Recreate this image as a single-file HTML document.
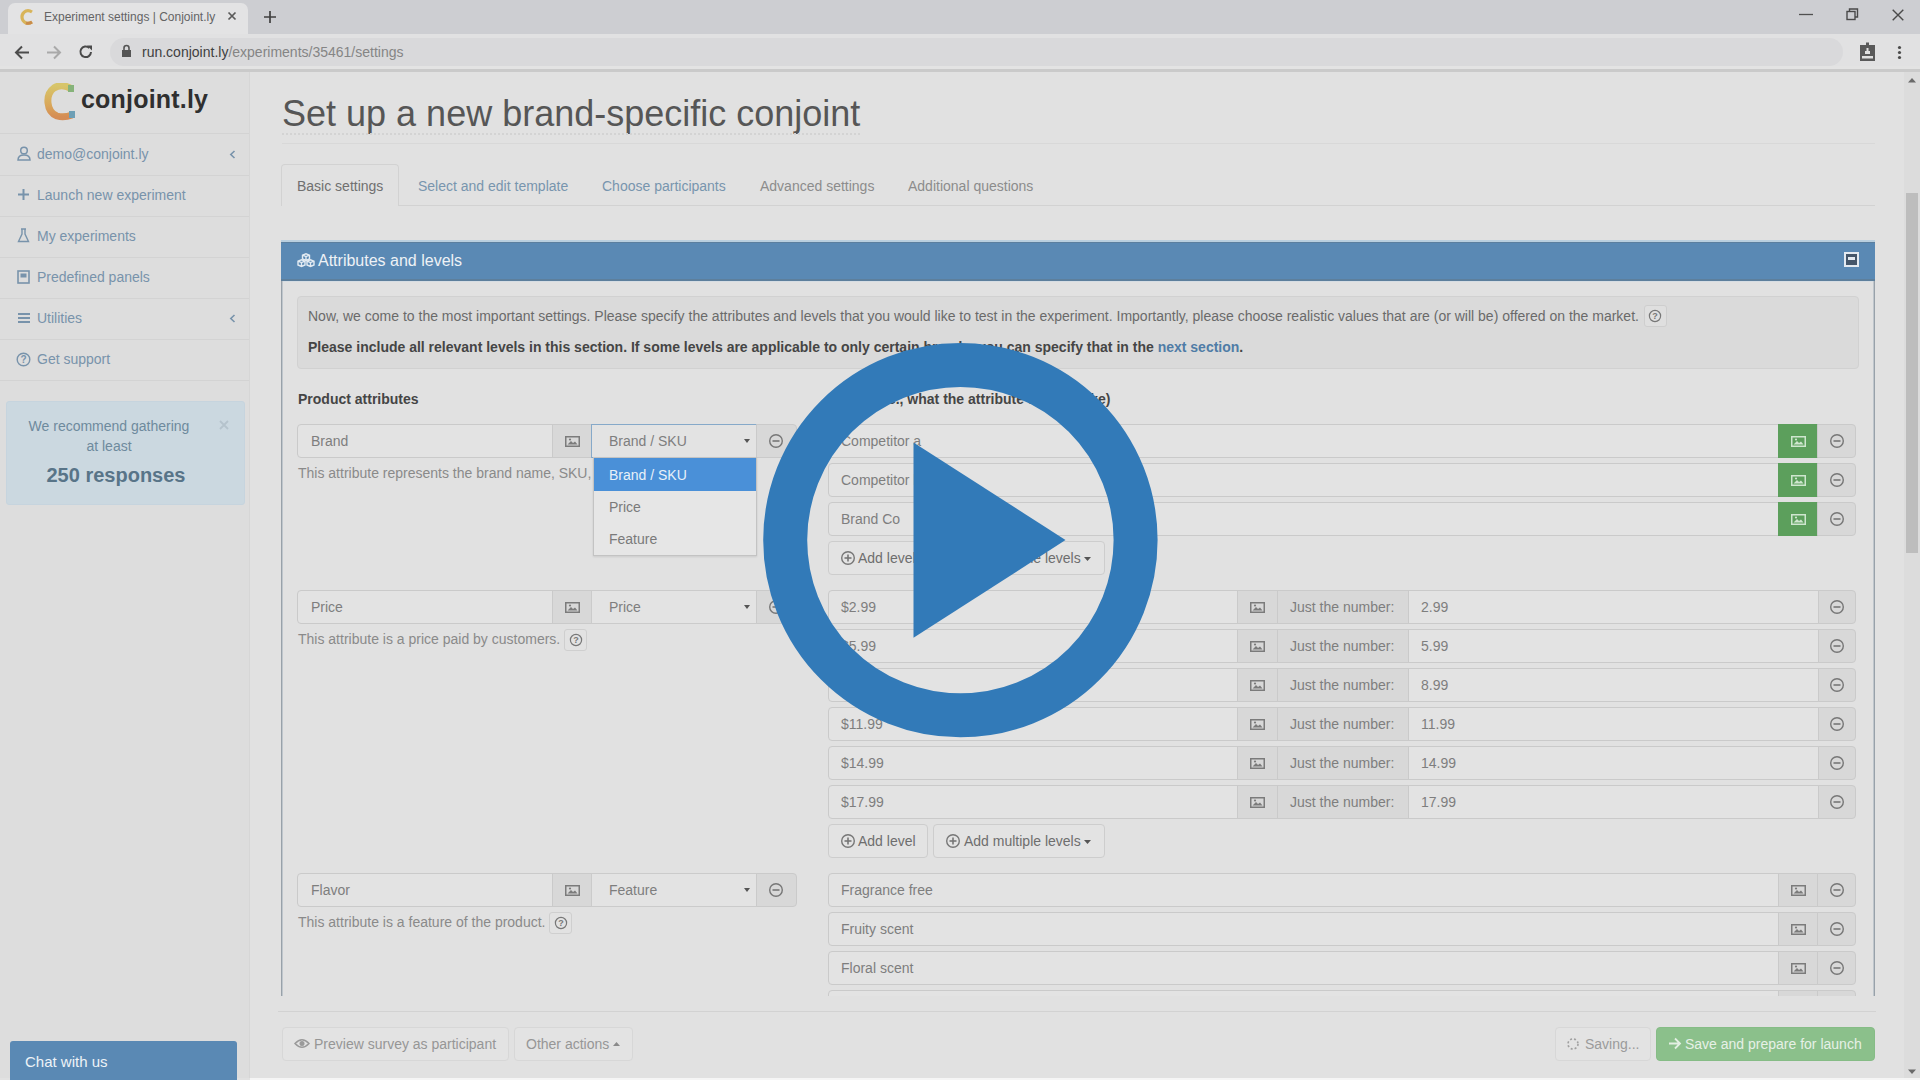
<!DOCTYPE html>
<html><head><meta charset="utf-8">
<style>
*{box-sizing:border-box;margin:0;padding:0}
html,body{width:1920px;height:1080px;overflow:hidden;background:#e1e1e1;font-family:"Liberation Sans",sans-serif;font-size:14px;color:#6d6d6d}
.a{position:absolute}
.t{position:absolute;white-space:nowrap;line-height:1}
.sep{position:absolute;left:0;width:249px;height:1px;background:#d3d3d3}
.mi{position:absolute;left:37px;font-size:14px;color:#7893ab;white-space:nowrap;line-height:1}
.inp{position:absolute;height:34px;background:#e3e3e3;border:1px solid #cacaca}
.add{position:absolute;height:34px;background:#d8d8d8;border:1px solid #cacaca}
.it{position:absolute;white-space:nowrap;line-height:1;font-size:14px;color:#7e7e7e}
.btn{position:absolute;height:34px;background:#e3e3e3;border:1px solid #cdcdcd;border-radius:4px}
</style></head><body>
<div id="pg" style="position:absolute;left:0;top:0;width:1920px;height:1080px">
<!-- ============ CHROME ============ -->
<div class="a" style="left:0;top:0;width:1920px;height:34px;background:#cdced2"></div>
<div class="a" style="left:8px;top:3px;width:240px;height:31px;background:#e3e3e4;border-radius:7px 7px 0 0"></div>
<svg class="a" style="left:20px;top:9px" width="14" height="16" viewBox="0 0 14 16">
 <path d="M12 3 Q9 1 6 2 Q2 4 2 8 Q2 12 6 14 Q9 15 12 13" fill="none" stroke="#d8b45a" stroke-width="3.2"/>
 <path d="M6 14 Q9 15 12 13" fill="none" stroke="#c98b4a" stroke-width="3"/>
</svg>
<div class="t" style="left:44px;top:11px;font-size:12px;color:#646464">Experiment settings | Conjoint.ly</div>
<svg class="a" style="left:227px;top:11px" width="10" height="10"><path d="M1.5 1.5 L8.5 8.5 M8.5 1.5 L1.5 8.5" stroke="#5a5a5a" stroke-width="1.7"/></svg>
<svg class="a" style="left:263px;top:10px" width="14" height="14"><path d="M7 1 V13 M1 7 H13" stroke="#404040" stroke-width="1.7"/></svg>
<svg class="a" style="left:1799px;top:13px" width="14" height="3"><path d="M0 1.5 H14" stroke="#505050" stroke-width="1.3"/></svg>
<svg class="a" style="left:1846px;top:8px" width="13" height="13"><rect x="1" y="3.5" width="8" height="8" fill="none" stroke="#4a4a4a" stroke-width="1.4"/><path d="M3.5 3.5 V1 H11.5 V9 H9" fill="none" stroke="#4a4a4a" stroke-width="1.4"/></svg>
<svg class="a" style="left:1892px;top:9px" width="12" height="12"><path d="M0.7 0.7 L11.3 11.3 M11.3 0.7 L0.7 11.3" stroke="#4a4a4a" stroke-width="1.4"/></svg>

<div class="a" style="left:0;top:34px;width:1920px;height:35px;background:#e1e1e2"></div>
<div class="a" style="left:110px;top:38px;width:1733px;height:28px;border-radius:14px;background:#d9d9db"></div>
<svg class="a" style="left:14px;top:45px" width="16" height="15"><path d="M15 7.5 H2.5 M8 1.5 L2 7.5 L8 13.5" fill="none" stroke="#4c4c4c" stroke-width="2"/></svg>
<svg class="a" style="left:46px;top:45px" width="16" height="15"><path d="M1 7.5 H13.5 M8 1.5 L14 7.5 L8 13.5" fill="none" stroke="#a9a9a9" stroke-width="2"/></svg>
<svg class="a" style="left:78px;top:44px" width="16" height="16"><path d="M13 8 A5.3 5.3 0 1 1 11.3 3.9" fill="none" stroke="#4a4a4a" stroke-width="2"/><path d="M9 1.5 H14 V6.5 Z" fill="#4a4a4a"/></svg>
<svg class="a" style="left:121px;top:44px" width="11" height="14"><path d="M3 6 V4 A2.5 2.5 0 0 1 8 4 V6" fill="none" stroke="#555" stroke-width="1.6"/><rect x="1" y="6" width="9" height="7" fill="#555"/></svg>
<div class="t" style="left:142px;top:45px;font-size:14px;color:#404040">run.conjoint.ly<span style="color:#858585">/experiments/35461/settings</span></div>
<svg class="a" style="left:1859px;top:42px" width="17" height="20"><rect x="1" y="3" width="15" height="16" fill="#595959"/><rect x="7" y="0.5" width="3" height="4" fill="#595959"/><rect x="7.5" y="6" width="2" height="3" fill="#e0e0e0"/><rect x="6" y="9" width="5" height="3" fill="#e0e0e0"/><rect x="3" y="14" width="11" height="2.5" fill="#e0e0e0"/></svg>
<svg class="a" style="left:1897px;top:45px" width="5" height="15"><circle cx="2.5" cy="2.5" r="1.6" fill="#4a4a4a"/><circle cx="2.5" cy="7.5" r="1.6" fill="#4a4a4a"/><circle cx="2.5" cy="12.5" r="1.6" fill="#4a4a4a"/></svg>
<div class="a" style="left:0;top:66px;width:1920px;height:3px;background:#e3e3e3"></div>
<div class="a" style="left:0;top:69px;width:1920px;height:3px;background:#cacaca"></div>

<!-- ============ SIDEBAR ============ -->
<div class="a" style="left:0;top:72px;width:249px;height:1006px;background:#dddddd"></div>
<div class="a" style="left:249px;top:72px;width:1px;height:1006px;background:#d6d6d6"></div>
<svg class="a" style="left:44px;top:83px" width="33" height="38" viewBox="0 0 33 38">
 <defs><linearGradient id="lg" x1="0" y1="0" x2="0" y2="1"><stop offset="0" stop-color="#d7c56a"/><stop offset="0.6" stop-color="#d9a85a"/><stop offset="1" stop-color="#d58d55"/></linearGradient></defs>
 <path d="M28 6 Q18 0 10 5 Q3 10 4 20 Q5 30 13 33 Q20 35 28 32" fill="none" stroke="url(#lg)" stroke-width="7"/>
 <rect x="24" y="2" width="6" height="7" fill="#86b37a"/>
 <rect x="25" y="28" width="6" height="7" fill="#6e9fb5"/>
</svg>
<div class="t" style="left:81px;top:87px;font-size:25px;font-weight:bold;color:#2f2f2f;letter-spacing:0.2px">conjoint.ly</div>
<div class="sep" style="top:133px"></div>
<div class="sep" style="top:175px"></div>
<div class="sep" style="top:216px"></div>
<div class="sep" style="top:257px"></div>
<div class="sep" style="top:298px"></div>
<div class="sep" style="top:339px"></div>
<div class="sep" style="top:380px"></div>
<!-- sidebar icons -->
<svg class="a" style="left:17px;top:146px" width="14" height="15"><circle cx="7" cy="4.5" r="3.3" fill="none" stroke="#7893ab" stroke-width="1.5"/><path d="M1 14 Q1 9 7 9 Q13 9 13 14 Z" fill="none" stroke="#7893ab" stroke-width="1.5"/></svg>
<svg class="a" style="left:17px;top:188px" width="13" height="13"><path d="M6.5 1 V12 M1 6.5 H12" stroke="#7893ab" stroke-width="2"/></svg>
<svg class="a" style="left:17px;top:228px" width="13" height="15"><path d="M4 1 H9 M5 1 V6 L1.5 13.5 H11.5 L8 6 V1" fill="none" stroke="#7893ab" stroke-width="1.4"/></svg>
<svg class="a" style="left:17px;top:270px" width="13" height="14"><rect x="1" y="1" width="11" height="12" fill="none" stroke="#7893ab" stroke-width="1.6"/><rect x="3.5" y="3.5" width="6" height="4" fill="#7893ab"/></svg>
<svg class="a" style="left:17px;top:312px" width="14" height="12"><path d="M1 2 H13 M1 6 H13 M1 10 H13" stroke="#7893ab" stroke-width="2"/></svg>
<svg class="a" style="left:16px;top:352px" width="15" height="15"><circle cx="7.5" cy="7.5" r="6.3" fill="none" stroke="#7893ab" stroke-width="1.4"/><text x="7.5" y="11.3" font-size="10" font-family="Liberation Sans" font-weight="bold" text-anchor="middle" fill="#7893ab">?</text></svg>
<svg class="a" style="left:229px;top:150px" width="7" height="9"><path d="M5.5 1 L1.8 4.5 L5.5 8" fill="none" stroke="#7893ab" stroke-width="1.6"/></svg>
<svg class="a" style="left:229px;top:314px" width="7" height="9"><path d="M5.5 1 L1.8 4.5 L5.5 8" fill="none" stroke="#7893ab" stroke-width="1.6"/></svg>
<div class="mi" style="top:147px">demo@conjoint.ly</div>
<div class="mi" style="top:188px">Launch new experiment</div>
<div class="mi" style="top:229px">My experiments</div>
<div class="mi" style="top:270px">Predefined panels</div>
<div class="mi" style="top:311px">Utilities</div>
<div class="mi" style="top:352px">Get support</div>
<div class="a" style="left:6px;top:401px;width:239px;height:104px;background:#cbd8e0;border:1px solid #c6d4de;border-radius:3px"></div>
<div class="t" style="left:6px;width:206px;text-align:center;top:419px;font-size:14px;color:#6e8a9d">We recommend gathering</div>
<div class="t" style="left:6px;width:206px;text-align:center;top:439px;font-size:14px;color:#6e8a9d">at least</div>
<div class="t" style="left:8px;width:216px;text-align:center;top:465px;font-size:20px;font-weight:bold;color:#587488">250 responses</div>
<svg class="a" style="left:219px;top:420px" width="10" height="10"><path d="M1 1 L9 9 M9 1 L1 9" stroke="#b5c3cc" stroke-width="1.8"/></svg>
<div class="a" style="left:10px;top:1041px;width:227px;height:39px;background:#5a89b4;border-radius:3px 3px 0 0"></div>
<div class="t" style="left:25px;top:1054px;font-size:15px;color:#eef3f7">Chat with us</div>

<!-- ============ MAIN ============ -->
<div class="t" style="left:282px;top:96px;font-size:36px;color:#565656">Set up a new brand-specific conjoint</div>
<div class="a" style="left:282px;top:133px;width:578px;height:0;border-top:2px dotted #d3d3d3"></div>
<div class="a" style="left:282px;top:143px;width:1593px;height:1px;background:#d8d8d8"></div>
<!-- tabs -->
<div class="a" style="left:282px;top:205px;width:1593px;height:1px;background:#d2d2d2"></div>
<div class="a" style="left:281px;top:164px;width:118px;height:42px;background:#e1e1e1;border:1px solid #d2d2d2;border-bottom:none;border-radius:4px 4px 0 0"></div>
<div class="t" style="left:297px;top:179px;color:#707070">Basic settings</div>
<div class="t" style="left:418px;top:179px;color:#7895ae">Select and edit template</div>
<div class="t" style="left:602px;top:179px;color:#7895ae">Choose participants</div>
<div class="t" style="left:760px;top:179px;color:#8c8c8c">Advanced settings</div>
<div class="t" style="left:908px;top:179px;color:#8c8c8c">Additional questions</div>

<!-- panel -->
<div class="a" style="left:281px;top:241px;width:1px;height:755px;background:#98a1a9"></div><div class="a" style="left:282px;top:241px;width:1px;height:755px;background:#bfc6cc"></div>
<div class="a" style="left:1873px;top:241px;width:1px;height:755px;background:#bfc6cc"></div><div class="a" style="left:1874px;top:241px;width:1px;height:755px;background:#98a1a9"></div>
<div class="a" style="left:281px;top:241px;width:1594px;height:40px;background:#5a89b4"></div>
<div class="a" style="left:281px;top:240px;width:1594px;height:2px;background:#b9cfdf"></div>
<div class="a" style="left:281px;top:242px;width:1594px;height:1px;background:#5b7f9f"></div>
<div class="a" style="left:281px;top:279px;width:1594px;height:2px;background:#5d7f9c"></div>
<div class="a" style="left:283px;top:281px;width:1590px;height:1px;background:#d6dde3"></div>
<svg class="a" style="left:297px;top:253px" width="18" height="15" viewBox="0 0 18 15"><g fill="none" stroke="#e3ebf2" stroke-width="1.4"><path d="M5.5 2.2 L9 0.8 L12.5 2.2 V6 L9 7.4 L5.5 6 Z M5.5 2.2 L9 3.6 L12.5 2.2 M9 3.6 V7.4"/><path d="M1 8.2 L4.5 6.8 L8 8.2 V12 L4.5 13.4 L1 12 Z M1 8.2 L4.5 9.6 L8 8.2 M4.5 9.6 V13.4"/><path d="M10 8.2 L13.5 6.8 L17 8.2 V12 L13.5 13.4 L10 12 Z M10 8.2 L13.5 9.6 L17 8.2 M13.5 9.6 V13.4"/></g></svg>
<div class="t" style="left:318px;top:253px;font-size:16px;color:#eef2f6">Attributes and levels</div>
<div class="a" style="left:1844px;top:252px;width:15px;height:15px;border:2px solid #e3eaf1;background:#44566a"></div>
<div class="a" style="left:1848px;top:257px;width:7px;height:3px;background:#e3eaf1"></div>

<!-- well -->
<div class="a" style="left:297px;top:296px;width:1562px;height:73px;background:#dadada;border:1px solid #d1d1d1;border-radius:4px"></div>
<div class="t" style="left:308px;top:309px;color:#6a6a6a">Now, we come to the most important settings. Please specify the attributes and levels that you would like to test in the experiment. Importantly, please choose realistic values that are (or will be) offered on the market.</div>
<div class="a" style="left:1644px;top:305px;width:23px;height:22px;border:1px solid #cecece;border-radius:3px;background:#dfdfdf"></div>
<svg class="a" style="left:1648px;top:309px" width="14" height="14" viewBox="0 0 14 14"><circle cx="7" cy="7" r="5.6" fill="none" stroke="#777" stroke-width="1.2"/><text x="7" y="10.2" font-size="9" font-family="Liberation Sans" font-weight="bold" text-anchor="middle" fill="#777">?</text></svg>
<div class="t" style="left:308px;top:340px;font-weight:bold;color:#454545">Please include all relevant levels in this section. If some levels are applicable to only certain brands, you can specify that in the <span style="color:#4f7ca6">next section</span>.</div>

<div class="t" style="left:298px;top:392px;font-weight:bold;color:#454545">Product attributes</div>
<div class="t" style="left:828px;top:392px;font-weight:bold;color:#454545">Levels (i.e., what the attribute should take)</div>

<div class="a" style="left:0;top:0;width:1920px;height:996px;overflow:hidden">
<div class="inp" style="left:297px;top:424px;width:256px;border-radius:4px 0 0 4px"></div>
<div class="it" style="left:311px;top:434px;">Brand</div>
<div class="add" style="left:552px;top:424px;width:40px;"></div>
<svg class="a" style="left:564.5px;top:435.5px" width="15" height="11" viewBox="0 0 15 11"><rect x="0.75" y="0.75" width="13.5" height="9.5" fill="none" stroke="#7b7b7b" stroke-width="1.5"/><path d="M2.5 8.5 L6 5 L8 7 L10 5.5 L12.5 8.5 Z" fill="#7b7b7b"/><circle cx="5" cy="3.5" r="1.1" fill="#7b7b7b"/></svg>
<div class="inp" style="left:591px;top:424px;width:166px;border-color:#86a9c9"></div>
<div class="it" style="left:609px;top:434px;">Brand / SKU</div>
<svg class="a" style="left:744px;top:438px" width="6" height="6"><path d="M0 1 L6 1 L3 5 Z" fill="#555"/></svg>
<div class="add" style="left:756px;top:424px;width:41px;border-radius:0 4px 4px 0"></div>
<svg class="a" style="left:768px;top:433px" width="16" height="16" viewBox="0 0 16 16"><circle cx="8" cy="8" r="6.3" fill="none" stroke="#777" stroke-width="1.4"/><rect x="4.5" y="7.2" width="7" height="1.6" fill="#777"/></svg>
<div class="t" style="left:298px;top:466px;color:#8a8a8a">This attribute represents the brand name, SKU,</div>
<div class="inp" style="left:297px;top:590px;width:256px;border-radius:4px 0 0 4px"></div>
<div class="it" style="left:311px;top:600px;">Price</div>
<div class="add" style="left:552px;top:590px;width:40px;"></div>
<svg class="a" style="left:564.5px;top:601.5px" width="15" height="11" viewBox="0 0 15 11"><rect x="0.75" y="0.75" width="13.5" height="9.5" fill="none" stroke="#7b7b7b" stroke-width="1.5"/><path d="M2.5 8.5 L6 5 L8 7 L10 5.5 L12.5 8.5 Z" fill="#7b7b7b"/><circle cx="5" cy="3.5" r="1.1" fill="#7b7b7b"/></svg>
<div class="inp" style="left:591px;top:590px;width:166px;border-color:#cbcbcb"></div>
<div class="it" style="left:609px;top:600px;">Price</div>
<svg class="a" style="left:744px;top:604px" width="6" height="6"><path d="M0 1 L6 1 L3 5 Z" fill="#555"/></svg>
<div class="add" style="left:756px;top:590px;width:41px;border-radius:0 4px 4px 0"></div>
<svg class="a" style="left:768px;top:599px" width="16" height="16" viewBox="0 0 16 16"><circle cx="8" cy="8" r="6.3" fill="none" stroke="#777" stroke-width="1.4"/><rect x="4.5" y="7.2" width="7" height="1.6" fill="#777"/></svg>
<div class="t" style="left:298px;top:632px;color:#8a8a8a">This attribute is a price paid by customers.</div>
<div class="a" style="left:564px;top:629px;width:23px;height:22px;border:1px solid #cfcfcf;border-radius:3px;background:#e2e2e2"></div><svg class="a" style="left:569px;top:633px" width="14" height="14" viewBox="0 0 14 14"><circle cx="7" cy="7" r="5.6" fill="none" stroke="#777" stroke-width="1.2"/><text x="7" y="10.2" font-size="9" font-family="Liberation Sans" font-weight="bold" text-anchor="middle" fill="#777">?</text></svg>
<div class="inp" style="left:297px;top:873px;width:256px;border-radius:4px 0 0 4px"></div>
<div class="it" style="left:311px;top:883px;">Flavor</div>
<div class="add" style="left:552px;top:873px;width:40px;"></div>
<svg class="a" style="left:564.5px;top:884.5px" width="15" height="11" viewBox="0 0 15 11"><rect x="0.75" y="0.75" width="13.5" height="9.5" fill="none" stroke="#7b7b7b" stroke-width="1.5"/><path d="M2.5 8.5 L6 5 L8 7 L10 5.5 L12.5 8.5 Z" fill="#7b7b7b"/><circle cx="5" cy="3.5" r="1.1" fill="#7b7b7b"/></svg>
<div class="inp" style="left:591px;top:873px;width:166px;border-color:#cbcbcb"></div>
<div class="it" style="left:609px;top:883px;">Feature</div>
<svg class="a" style="left:744px;top:887px" width="6" height="6"><path d="M0 1 L6 1 L3 5 Z" fill="#555"/></svg>
<div class="add" style="left:756px;top:873px;width:41px;border-radius:0 4px 4px 0"></div>
<svg class="a" style="left:768px;top:882px" width="16" height="16" viewBox="0 0 16 16"><circle cx="8" cy="8" r="6.3" fill="none" stroke="#777" stroke-width="1.4"/><rect x="4.5" y="7.2" width="7" height="1.6" fill="#777"/></svg>
<div class="t" style="left:298px;top:915px;color:#8a8a8a">This attribute is a feature of the product.</div>
<div class="a" style="left:549px;top:912px;width:23px;height:22px;border:1px solid #cfcfcf;border-radius:3px;background:#e2e2e2"></div><svg class="a" style="left:554px;top:916px" width="14" height="14" viewBox="0 0 14 14"><circle cx="7" cy="7" r="5.6" fill="none" stroke="#777" stroke-width="1.2"/><text x="7" y="10.2" font-size="9" font-family="Liberation Sans" font-weight="bold" text-anchor="middle" fill="#777">?</text></svg>
<div class="inp" style="left:828px;top:424px;width:951px;border-radius:4px 0 0 4px"></div>
<div class="it" style="left:841px;top:434px;">Competitor a</div>
<div class="add" style="left:1778px;top:424px;width:40px;background:#5c9f5c;border-color:#5c9f5c"></div>
<svg class="a" style="left:1790.5px;top:435.5px" width="15" height="11" viewBox="0 0 15 11"><rect x="0.75" y="0.75" width="13.5" height="9.5" fill="none" stroke="#cfe6cf" stroke-width="1.5"/><path d="M2.5 8.5 L6 5 L8 7 L10 5.5 L12.5 8.5 Z" fill="#cfe6cf"/><circle cx="5" cy="3.5" r="1.1" fill="#cfe6cf"/></svg>
<div class="add" style="left:1817px;top:424px;width:39px;border-radius:0 4px 4px 0"></div>
<svg class="a" style="left:1829px;top:433px" width="16" height="16" viewBox="0 0 16 16"><circle cx="8" cy="8" r="6.3" fill="none" stroke="#777" stroke-width="1.4"/><rect x="4.5" y="7.2" width="7" height="1.6" fill="#777"/></svg>
<div class="inp" style="left:828px;top:463px;width:951px;border-radius:4px 0 0 4px"></div>
<div class="it" style="left:841px;top:473px;">Competitor b</div>
<div class="add" style="left:1778px;top:463px;width:40px;background:#5c9f5c;border-color:#5c9f5c"></div>
<svg class="a" style="left:1790.5px;top:474.5px" width="15" height="11" viewBox="0 0 15 11"><rect x="0.75" y="0.75" width="13.5" height="9.5" fill="none" stroke="#cfe6cf" stroke-width="1.5"/><path d="M2.5 8.5 L6 5 L8 7 L10 5.5 L12.5 8.5 Z" fill="#cfe6cf"/><circle cx="5" cy="3.5" r="1.1" fill="#cfe6cf"/></svg>
<div class="add" style="left:1817px;top:463px;width:39px;border-radius:0 4px 4px 0"></div>
<svg class="a" style="left:1829px;top:472px" width="16" height="16" viewBox="0 0 16 16"><circle cx="8" cy="8" r="6.3" fill="none" stroke="#777" stroke-width="1.4"/><rect x="4.5" y="7.2" width="7" height="1.6" fill="#777"/></svg>
<div class="inp" style="left:828px;top:502px;width:951px;border-radius:4px 0 0 4px"></div>
<div class="it" style="left:841px;top:512px;">Brand Co</div>
<div class="add" style="left:1778px;top:502px;width:40px;background:#5c9f5c;border-color:#5c9f5c"></div>
<svg class="a" style="left:1790.5px;top:513.5px" width="15" height="11" viewBox="0 0 15 11"><rect x="0.75" y="0.75" width="13.5" height="9.5" fill="none" stroke="#cfe6cf" stroke-width="1.5"/><path d="M2.5 8.5 L6 5 L8 7 L10 5.5 L12.5 8.5 Z" fill="#cfe6cf"/><circle cx="5" cy="3.5" r="1.1" fill="#cfe6cf"/></svg>
<div class="add" style="left:1817px;top:502px;width:39px;border-radius:0 4px 4px 0"></div>
<svg class="a" style="left:1829px;top:511px" width="16" height="16" viewBox="0 0 16 16"><circle cx="8" cy="8" r="6.3" fill="none" stroke="#777" stroke-width="1.4"/><rect x="4.5" y="7.2" width="7" height="1.6" fill="#777"/></svg>
<div class="btn" style="left:828px;top:541px;width:100px;"></div>
<svg class="a" style="left:840px;top:550px" width="16" height="16" viewBox="0 0 16 16"><circle cx="8" cy="8" r="6.3" fill="none" stroke="#777" stroke-width="1.4"/><rect x="4.5" y="7.2" width="7" height="1.6" fill="#777"/><rect x="7.2" y="4.5" width="1.6" height="7" fill="#777"/></svg>
<div class="it" style="left:858px;top:551px;color:#6e6e6e">Add level</div>
<div class="btn" style="left:933px;top:541px;width:172px;"></div>
<svg class="a" style="left:945px;top:550px" width="16" height="16" viewBox="0 0 16 16"><circle cx="8" cy="8" r="6.3" fill="none" stroke="#777" stroke-width="1.4"/><rect x="4.5" y="7.2" width="7" height="1.6" fill="#777"/><rect x="7.2" y="4.5" width="1.6" height="7" fill="#777"/></svg>
<div class="it" style="left:964px;top:551px;color:#6e6e6e">Add multiple levels</div>
<svg class="a" style="left:1084px;top:557px" width="7" height="5"><path d="M0 0 L7 0 L3.5 4 Z" fill="#555"/></svg>
<div class="inp" style="left:828px;top:590px;width:410px;border-radius:4px 0 0 4px"></div>
<div class="it" style="left:841px;top:600px;">$2.99</div>
<div class="add" style="left:1237px;top:590px;width:41px;"></div>
<svg class="a" style="left:1249.5px;top:601.5px" width="15" height="11" viewBox="0 0 15 11"><rect x="0.75" y="0.75" width="13.5" height="9.5" fill="none" stroke="#7b7b7b" stroke-width="1.5"/><path d="M2.5 8.5 L6 5 L8 7 L10 5.5 L12.5 8.5 Z" fill="#7b7b7b"/><circle cx="5" cy="3.5" r="1.1" fill="#7b7b7b"/></svg>
<div class="add" style="left:1277px;top:590px;width:132px;"></div>
<div class="it" style="left:1290px;top:600px;">Just the number:</div>
<div class="inp" style="left:1408px;top:590px;width:411px;"></div>
<div class="it" style="left:1421px;top:600px;">2.99</div>
<div class="add" style="left:1818px;top:590px;width:38px;border-radius:0 4px 4px 0"></div>
<svg class="a" style="left:1829px;top:599px" width="16" height="16" viewBox="0 0 16 16"><circle cx="8" cy="8" r="6.3" fill="none" stroke="#777" stroke-width="1.4"/><rect x="4.5" y="7.2" width="7" height="1.6" fill="#777"/></svg>
<div class="inp" style="left:828px;top:629px;width:410px;border-radius:4px 0 0 4px"></div>
<div class="it" style="left:841px;top:639px;">$5.99</div>
<div class="add" style="left:1237px;top:629px;width:41px;"></div>
<svg class="a" style="left:1249.5px;top:640.5px" width="15" height="11" viewBox="0 0 15 11"><rect x="0.75" y="0.75" width="13.5" height="9.5" fill="none" stroke="#7b7b7b" stroke-width="1.5"/><path d="M2.5 8.5 L6 5 L8 7 L10 5.5 L12.5 8.5 Z" fill="#7b7b7b"/><circle cx="5" cy="3.5" r="1.1" fill="#7b7b7b"/></svg>
<div class="add" style="left:1277px;top:629px;width:132px;"></div>
<div class="it" style="left:1290px;top:639px;">Just the number:</div>
<div class="inp" style="left:1408px;top:629px;width:411px;"></div>
<div class="it" style="left:1421px;top:639px;">5.99</div>
<div class="add" style="left:1818px;top:629px;width:38px;border-radius:0 4px 4px 0"></div>
<svg class="a" style="left:1829px;top:638px" width="16" height="16" viewBox="0 0 16 16"><circle cx="8" cy="8" r="6.3" fill="none" stroke="#777" stroke-width="1.4"/><rect x="4.5" y="7.2" width="7" height="1.6" fill="#777"/></svg>
<div class="inp" style="left:828px;top:668px;width:410px;border-radius:4px 0 0 4px"></div>
<div class="it" style="left:841px;top:678px;">$8.99</div>
<div class="add" style="left:1237px;top:668px;width:41px;"></div>
<svg class="a" style="left:1249.5px;top:679.5px" width="15" height="11" viewBox="0 0 15 11"><rect x="0.75" y="0.75" width="13.5" height="9.5" fill="none" stroke="#7b7b7b" stroke-width="1.5"/><path d="M2.5 8.5 L6 5 L8 7 L10 5.5 L12.5 8.5 Z" fill="#7b7b7b"/><circle cx="5" cy="3.5" r="1.1" fill="#7b7b7b"/></svg>
<div class="add" style="left:1277px;top:668px;width:132px;"></div>
<div class="it" style="left:1290px;top:678px;">Just the number:</div>
<div class="inp" style="left:1408px;top:668px;width:411px;"></div>
<div class="it" style="left:1421px;top:678px;">8.99</div>
<div class="add" style="left:1818px;top:668px;width:38px;border-radius:0 4px 4px 0"></div>
<svg class="a" style="left:1829px;top:677px" width="16" height="16" viewBox="0 0 16 16"><circle cx="8" cy="8" r="6.3" fill="none" stroke="#777" stroke-width="1.4"/><rect x="4.5" y="7.2" width="7" height="1.6" fill="#777"/></svg>
<div class="inp" style="left:828px;top:707px;width:410px;border-radius:4px 0 0 4px"></div>
<div class="it" style="left:841px;top:717px;">$11.99</div>
<div class="add" style="left:1237px;top:707px;width:41px;"></div>
<svg class="a" style="left:1249.5px;top:718.5px" width="15" height="11" viewBox="0 0 15 11"><rect x="0.75" y="0.75" width="13.5" height="9.5" fill="none" stroke="#7b7b7b" stroke-width="1.5"/><path d="M2.5 8.5 L6 5 L8 7 L10 5.5 L12.5 8.5 Z" fill="#7b7b7b"/><circle cx="5" cy="3.5" r="1.1" fill="#7b7b7b"/></svg>
<div class="add" style="left:1277px;top:707px;width:132px;"></div>
<div class="it" style="left:1290px;top:717px;">Just the number:</div>
<div class="inp" style="left:1408px;top:707px;width:411px;"></div>
<div class="it" style="left:1421px;top:717px;">11.99</div>
<div class="add" style="left:1818px;top:707px;width:38px;border-radius:0 4px 4px 0"></div>
<svg class="a" style="left:1829px;top:716px" width="16" height="16" viewBox="0 0 16 16"><circle cx="8" cy="8" r="6.3" fill="none" stroke="#777" stroke-width="1.4"/><rect x="4.5" y="7.2" width="7" height="1.6" fill="#777"/></svg>
<div class="inp" style="left:828px;top:746px;width:410px;border-radius:4px 0 0 4px"></div>
<div class="it" style="left:841px;top:756px;">$14.99</div>
<div class="add" style="left:1237px;top:746px;width:41px;"></div>
<svg class="a" style="left:1249.5px;top:757.5px" width="15" height="11" viewBox="0 0 15 11"><rect x="0.75" y="0.75" width="13.5" height="9.5" fill="none" stroke="#7b7b7b" stroke-width="1.5"/><path d="M2.5 8.5 L6 5 L8 7 L10 5.5 L12.5 8.5 Z" fill="#7b7b7b"/><circle cx="5" cy="3.5" r="1.1" fill="#7b7b7b"/></svg>
<div class="add" style="left:1277px;top:746px;width:132px;"></div>
<div class="it" style="left:1290px;top:756px;">Just the number:</div>
<div class="inp" style="left:1408px;top:746px;width:411px;"></div>
<div class="it" style="left:1421px;top:756px;">14.99</div>
<div class="add" style="left:1818px;top:746px;width:38px;border-radius:0 4px 4px 0"></div>
<svg class="a" style="left:1829px;top:755px" width="16" height="16" viewBox="0 0 16 16"><circle cx="8" cy="8" r="6.3" fill="none" stroke="#777" stroke-width="1.4"/><rect x="4.5" y="7.2" width="7" height="1.6" fill="#777"/></svg>
<div class="inp" style="left:828px;top:785px;width:410px;border-radius:4px 0 0 4px"></div>
<div class="it" style="left:841px;top:795px;">$17.99</div>
<div class="add" style="left:1237px;top:785px;width:41px;"></div>
<svg class="a" style="left:1249.5px;top:796.5px" width="15" height="11" viewBox="0 0 15 11"><rect x="0.75" y="0.75" width="13.5" height="9.5" fill="none" stroke="#7b7b7b" stroke-width="1.5"/><path d="M2.5 8.5 L6 5 L8 7 L10 5.5 L12.5 8.5 Z" fill="#7b7b7b"/><circle cx="5" cy="3.5" r="1.1" fill="#7b7b7b"/></svg>
<div class="add" style="left:1277px;top:785px;width:132px;"></div>
<div class="it" style="left:1290px;top:795px;">Just the number:</div>
<div class="inp" style="left:1408px;top:785px;width:411px;"></div>
<div class="it" style="left:1421px;top:795px;">17.99</div>
<div class="add" style="left:1818px;top:785px;width:38px;border-radius:0 4px 4px 0"></div>
<svg class="a" style="left:1829px;top:794px" width="16" height="16" viewBox="0 0 16 16"><circle cx="8" cy="8" r="6.3" fill="none" stroke="#777" stroke-width="1.4"/><rect x="4.5" y="7.2" width="7" height="1.6" fill="#777"/></svg>
<div class="btn" style="left:828px;top:824px;width:100px;"></div>
<svg class="a" style="left:840px;top:833px" width="16" height="16" viewBox="0 0 16 16"><circle cx="8" cy="8" r="6.3" fill="none" stroke="#777" stroke-width="1.4"/><rect x="4.5" y="7.2" width="7" height="1.6" fill="#777"/><rect x="7.2" y="4.5" width="1.6" height="7" fill="#777"/></svg>
<div class="it" style="left:858px;top:834px;color:#6e6e6e">Add level</div>
<div class="btn" style="left:933px;top:824px;width:172px;"></div>
<svg class="a" style="left:945px;top:833px" width="16" height="16" viewBox="0 0 16 16"><circle cx="8" cy="8" r="6.3" fill="none" stroke="#777" stroke-width="1.4"/><rect x="4.5" y="7.2" width="7" height="1.6" fill="#777"/><rect x="7.2" y="4.5" width="1.6" height="7" fill="#777"/></svg>
<div class="it" style="left:964px;top:834px;color:#6e6e6e">Add multiple levels</div>
<svg class="a" style="left:1084px;top:840px" width="7" height="5"><path d="M0 0 L7 0 L3.5 4 Z" fill="#555"/></svg>
<div class="inp" style="left:828px;top:873px;width:951px;border-radius:4px 0 0 4px"></div>
<div class="it" style="left:841px;top:883px;">Fragrance free</div>
<div class="add" style="left:1778px;top:873px;width:40px;"></div>
<svg class="a" style="left:1790.5px;top:884.5px" width="15" height="11" viewBox="0 0 15 11"><rect x="0.75" y="0.75" width="13.5" height="9.5" fill="none" stroke="#7b7b7b" stroke-width="1.5"/><path d="M2.5 8.5 L6 5 L8 7 L10 5.5 L12.5 8.5 Z" fill="#7b7b7b"/><circle cx="5" cy="3.5" r="1.1" fill="#7b7b7b"/></svg>
<div class="add" style="left:1817px;top:873px;width:39px;border-radius:0 4px 4px 0"></div>
<svg class="a" style="left:1829px;top:882px" width="16" height="16" viewBox="0 0 16 16"><circle cx="8" cy="8" r="6.3" fill="none" stroke="#777" stroke-width="1.4"/><rect x="4.5" y="7.2" width="7" height="1.6" fill="#777"/></svg>
<div class="inp" style="left:828px;top:912px;width:951px;border-radius:4px 0 0 4px"></div>
<div class="it" style="left:841px;top:922px;">Fruity scent</div>
<div class="add" style="left:1778px;top:912px;width:40px;"></div>
<svg class="a" style="left:1790.5px;top:923.5px" width="15" height="11" viewBox="0 0 15 11"><rect x="0.75" y="0.75" width="13.5" height="9.5" fill="none" stroke="#7b7b7b" stroke-width="1.5"/><path d="M2.5 8.5 L6 5 L8 7 L10 5.5 L12.5 8.5 Z" fill="#7b7b7b"/><circle cx="5" cy="3.5" r="1.1" fill="#7b7b7b"/></svg>
<div class="add" style="left:1817px;top:912px;width:39px;border-radius:0 4px 4px 0"></div>
<svg class="a" style="left:1829px;top:921px" width="16" height="16" viewBox="0 0 16 16"><circle cx="8" cy="8" r="6.3" fill="none" stroke="#777" stroke-width="1.4"/><rect x="4.5" y="7.2" width="7" height="1.6" fill="#777"/></svg>
<div class="inp" style="left:828px;top:951px;width:951px;border-radius:4px 0 0 4px"></div>
<div class="it" style="left:841px;top:961px;">Floral scent</div>
<div class="add" style="left:1778px;top:951px;width:40px;"></div>
<svg class="a" style="left:1790.5px;top:962.5px" width="15" height="11" viewBox="0 0 15 11"><rect x="0.75" y="0.75" width="13.5" height="9.5" fill="none" stroke="#7b7b7b" stroke-width="1.5"/><path d="M2.5 8.5 L6 5 L8 7 L10 5.5 L12.5 8.5 Z" fill="#7b7b7b"/><circle cx="5" cy="3.5" r="1.1" fill="#7b7b7b"/></svg>
<div class="add" style="left:1817px;top:951px;width:39px;border-radius:0 4px 4px 0"></div>
<svg class="a" style="left:1829px;top:960px" width="16" height="16" viewBox="0 0 16 16"><circle cx="8" cy="8" r="6.3" fill="none" stroke="#777" stroke-width="1.4"/><rect x="4.5" y="7.2" width="7" height="1.6" fill="#777"/></svg>
<div class="inp" style="left:828px;top:990px;width:951px;border-radius:4px 0 0 4px"></div>
<div class="it" style="left:841px;top:1000px;">Musk</div>
<div class="add" style="left:1778px;top:990px;width:40px;"></div>
<svg class="a" style="left:1790.5px;top:1001.5px" width="15" height="11" viewBox="0 0 15 11"><rect x="0.75" y="0.75" width="13.5" height="9.5" fill="none" stroke="#7b7b7b" stroke-width="1.5"/><path d="M2.5 8.5 L6 5 L8 7 L10 5.5 L12.5 8.5 Z" fill="#7b7b7b"/><circle cx="5" cy="3.5" r="1.1" fill="#7b7b7b"/></svg>
<div class="add" style="left:1817px;top:990px;width:39px;border-radius:0 4px 4px 0"></div>
<svg class="a" style="left:1829px;top:999px" width="16" height="16" viewBox="0 0 16 16"><circle cx="8" cy="8" r="6.3" fill="none" stroke="#777" stroke-width="1.4"/><rect x="4.5" y="7.2" width="7" height="1.6" fill="#777"/></svg>
</div>
<div class="a" style="left:593px;top:457px;width:164px;height:99px;background:#e6e6e6;border:1px solid #c3c3c3;box-shadow:0 1px 2px rgba(0,0,0,0.1)"></div>
<div class="a" style="left:594px;top:458px;width:162px;height:33px;background:#4a90d8"></div>
<div class="it" style="left:609px;top:468px;color:#e8f0f8">Brand / SKU</div>
<div class="it" style="left:609px;top:500px;color:#7a7a7a">Price</div>
<div class="it" style="left:609px;top:532px;color:#7a7a7a">Feature</div>


<!-- footer -->
<div class="a" style="left:278px;top:1011px;width:1598px;height:1px;background:#d2d2d2"></div>
<div class="btn" style="left:282px;top:1027px;width:227px;height:34px;border-color:#d7d7d7"></div>
<svg class="a" style="left:294px;top:1038px" width="16" height="11"><path d="M1 5.5 Q8 -2 15 5.5 Q8 13 1 5.5 Z" fill="none" stroke="#9a9a9a" stroke-width="1.5"/><circle cx="8" cy="5.5" r="2.5" fill="#9a9a9a"/></svg>
<div class="t" style="left:314px;top:1037px;color:#969696">Preview survey as participant</div>
<div class="btn" style="left:514px;top:1027px;width:119px;height:34px;border-color:#d7d7d7"></div>
<div class="t" style="left:526px;top:1037px;color:#969696">Other actions</div>
<svg class="a" style="left:613px;top:1042px" width="7" height="5"><path d="M0 4 L7 4 L3.5 0 Z" fill="#8a8a8a"/></svg>
<div class="btn" style="left:1555px;top:1027px;width:96px;height:34px;border-color:#d7d7d7"></div>
<svg class="a" style="left:1566px;top:1037px" width="14" height="14"><circle cx="7" cy="7" r="5" fill="none" stroke="#a0a0a0" stroke-width="1.6" stroke-dasharray="2 2"/></svg>
<div class="t" style="left:1585px;top:1037px;color:#9b9b9b">Saving...</div>
<div class="btn" style="left:1656px;top:1027px;width:219px;height:34px;background:#8bc08b;border-color:#86bc86"></div>
<svg class="a" style="left:1668px;top:1037px" width="14" height="13"><path d="M1 6.5 H12 M7 1.5 L12 6.5 L7 11.5" fill="none" stroke="#e3efe3" stroke-width="1.8"/></svg>
<div class="t" style="left:1685px;top:1037px;color:#e6f0e6">Save and prepare for launch</div>

<!-- scrollbar -->
<div class="a" style="left:1904px;top:72px;width:16px;height:1006px;background:#dcdcdc"></div>
<div class="a" style="left:1906px;top:193px;width:12px;height:360px;background:#bdbdbd"></div>
<svg class="a" style="left:1907px;top:76px" width="10" height="8"><path d="M1 6.5 L9 6.5 L5 2 Z" fill="#6a6a6a"/></svg>
<svg class="a" style="left:1907px;top:1068px" width="10" height="8"><path d="M1 1.5 L9 1.5 L5 6 Z" fill="#6a6a6a"/></svg>
<div class="a" style="left:250px;top:1078px;width:1670px;height:2px;background:#f5f5f5"></div>

</div>
<!-- play button -->
<svg class="a" style="left:0;top:0" width="1920" height="1080">
<circle cx="960.4" cy="540.1" r="175.2" fill="none" stroke="#327ab8" stroke-width="44"/>
<polygon points="913.5,442.5 913.5,637.8 1065.5,540.1" fill="#327ab8"/>
</svg>
</body></html>
